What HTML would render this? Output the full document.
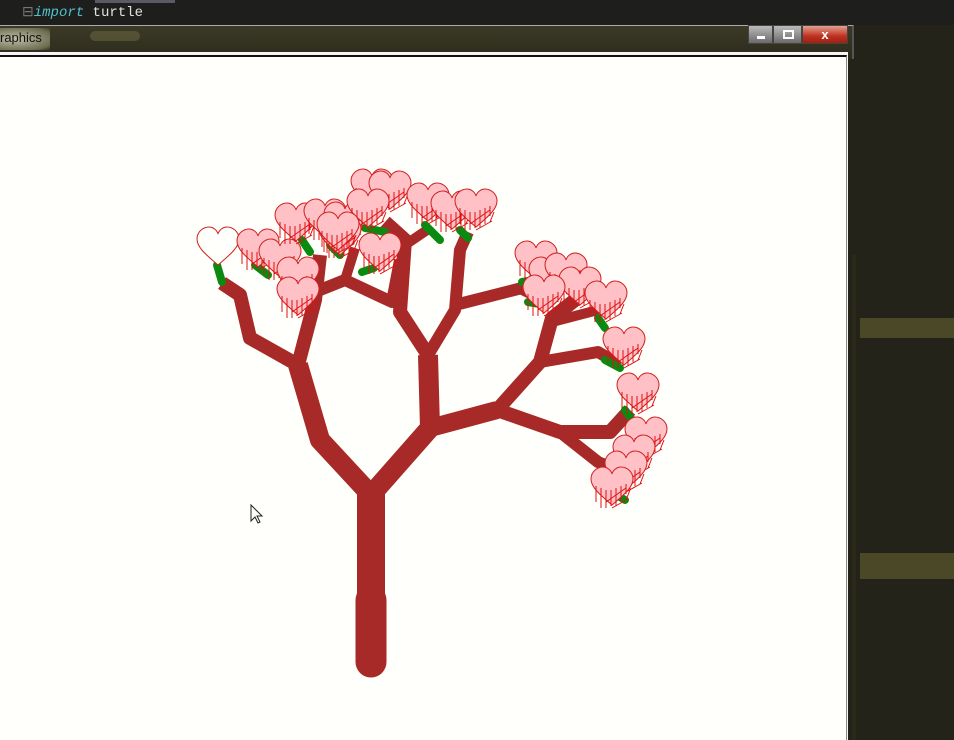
<!DOCTYPE html>
<html><head><meta charset="utf-8"><style>
html,body{margin:0;padding:0;width:954px;height:740px;overflow:hidden;background:#24231a;}
#wrap{position:relative;width:954px;height:740px;}
.abs{position:absolute;}
</style></head><body><div id="wrap">
<div class="abs" style="left:0;top:0;width:954px;height:25px;background:#1e1e1c"></div>
<div class="abs" style="left:95px;top:0;width:80px;height:3px;background:#5a5a64"></div>
<div class="abs" style="left:22px;top:4px;font:14px 'Liberation Mono',monospace;color:#e0e0e0;white-space:pre"><span style="color:#777">⊟</span><span style="color:#4fc1c9;font-style:italic">import</span> turtle</div>
<div class="abs" style="left:0;top:25px;width:852px;height:33px;background:linear-gradient(#3c3a26,#2c2b1c);border-top:1px solid #aaa;border-right:2px solid #555"></div>
<div class="abs" style="left:0;top:28px;width:50px;height:22px;background:radial-gradient(ellipse at 30% 50%,#bfbfa8,#6b6b50 80%,transparent)"></div>
<div class="abs" style="left:90px;top:31px;width:50px;height:10px;background:#5a5838;border-radius:5px;opacity:.8"></div>
<div class="abs" style="left:0;top:30px;font:13px 'Liberation Sans',sans-serif;color:#111">raphics</div>
<div class="abs" style="left:748px;top:25px;width:25px;height:19px;background:linear-gradient(#bbb,#6a6a6a);border:1px solid #444;box-sizing:border-box"><div style="position:absolute;left:8px;top:10px;width:8px;height:3px;background:#fff"></div></div>
<div class="abs" style="left:773px;top:25px;width:29px;height:19px;background:linear-gradient(#bbb,#6a6a6a);border:1px solid #444;box-sizing:border-box"><div style="position:absolute;left:9px;top:4px;width:7px;height:5px;border:2px solid #fff"></div></div>
<div class="abs" style="left:802px;top:25px;width:46px;height:19px;background:linear-gradient(#e0a090,#c03020 60%,#a02010);border:1px solid #444;box-sizing:border-box;color:#fff;font:bold 13px 'Liberation Sans',sans-serif;text-align:center;line-height:17px">x</div>
<div class="abs" style="left:0;top:52px;width:848px;height:688px;background:#f4f4f0"></div>
<div class="abs" style="left:0;top:55px;width:846px;height:685px;background:#fffffb;border-top:2px solid #111;border-right:1px solid #888"></div>
<div class="abs" style="left:852px;top:255px;width:4px;height:485px;background:#2a2818"></div>
<div class="abs" style="left:860px;top:318px;width:94px;height:20px;background:#4a4826"></div>
<div class="abs" style="left:860px;top:553px;width:94px;height:26px;background:#4a4826"></div>
<svg class="abs" style="left:0;top:0" width="954" height="740" viewBox="0 0 954 740">
<defs>
<g id="h">
<path d="M0,15 C-13,4 -21,-3 -21,-11 C-21,-19 -14,-23 -9,-23 C-5,-23 -1,-20 0,-16 C1,-20 5,-23 9,-23 C14,-23 21,-19 21,-11 C21,-3 13,4 0,15 Z" fill="#ffc0c6" stroke="#d02020" stroke-width="1"/>
<path d="M-16,-4 v16 M-11,-2 v20 M-6,0 v18 M-1,0 v16 M4,-2 v18 M9,-4 v16 M14,-6 v10 M-6,12 l20,-14 M0,18 l16,-9 M18,0 l-4,10" stroke="#e01010" stroke-width="1" fill="none"/>
</g>
<g id="hw">
<path d="M0,15 C-13,4 -21,-3 -21,-11 C-21,-19 -14,-23 -9,-23 C-5,-23 -1,-20 0,-16 C1,-20 5,-23 9,-23 C14,-23 21,-19 21,-11 C21,-3 13,4 0,15 Z" fill="#fffffb" stroke="#d02020" stroke-width="1"/>
</g>
</defs>
<g stroke="#a82a28" stroke-linecap="butt" stroke-linejoin="round" fill="none">
<path d="M371,600 V490" stroke-width="28"/>
<line x1="371" y1="600" x2="371" y2="662" stroke-width="31" stroke-linecap="round"/>
<path d="M371,495 L320,440 L298,365" stroke-width="20"/>
<path d="M371,495 L430,428 L428,355" stroke-width="20"/>
<path d="M430,428 L497,410" stroke-width="18"/>
<path d="M298,365 L250,338 L240,295 L222,283" stroke-width="14"/>
<path d="M298,365 L315,300 L320,255" stroke-width="14"/>
<path d="M320,290 L345,280 L392,302 L400,260" stroke-width="12"/>
<path d="M345,280 L355,248" stroke-width="10"/>
<path d="M428,355 L400,312 L405,240 L385,222" stroke-width="14"/>
<path d="M405,245 L430,228" stroke-width="10"/>
<path d="M428,355 L455,310 L460,250 L468,232" stroke-width="12"/>
<path d="M455,305 L522,288 L540,278" stroke-width="12"/>
<path d="M520,290 L540,300" stroke-width="8"/>
<path d="M497,410 L540,362 L552,318 L575,300" stroke-width="14"/>
<path d="M540,362 L598,352 L620,365" stroke-width="12"/>
<path d="M552,322 L598,310" stroke-width="10"/>
<path d="M497,410 L560,432 L610,432 L630,410" stroke-width="14"/>
<path d="M560,432 L598,462 L622,472" stroke-width="12"/>
</g>
<g stroke="#0a8a10" stroke-width="8" stroke-linecap="round">
<path d="M217,265 L222,282"/><path d="M255,265 L268,275"/><path d="M302,240 L310,252"/><path d="M330,245 L340,255"/>
<path d="M365,228 L385,232"/><path d="M362,272 L374,268"/><path d="M425,225 L440,240"/><path d="M460,230 L468,238"/>
<path d="M522,282 L535,280"/><path d="M528,302 L540,304"/><path d="M598,318 L605,328"/><path d="M605,360 L620,368"/>
<path d="M625,410 L632,420"/><path d="M625,452 L645,450"/><path d="M618,470 L630,478"/><path d="M605,488 L625,500"/>
</g>
<g>
<use href="#hw" x="218" y="250"/>
<use href="#h" x="258" y="252"/><use href="#h" x="280" y="262"/><use href="#h" x="298" y="280"/><use href="#h" x="298" y="300"/>
<use href="#h" x="296" y="226"/><use href="#h" x="325" y="222"/><use href="#h" x="345" y="225"/><use href="#h" x="340" y="240"/>
<use href="#h" x="372" y="192"/><use href="#h" x="390" y="194"/><use href="#h" x="368" y="212"/><use href="#h" x="428" y="206"/>
<use href="#h" x="452" y="214"/><use href="#h" x="476" y="212"/><use href="#h" x="380" y="256"/><use href="#h" x="338" y="235"/>
<use href="#h" x="536" y="264"/><use href="#h" x="550" y="280"/><use href="#h" x="566" y="276"/><use href="#h" x="580" y="290"/><use href="#h" x="544" y="298"/>
<use href="#h" x="606" y="304"/><use href="#h" x="624" y="350"/><use href="#h" x="638" y="396"/><use href="#h" x="646" y="440"/>
<use href="#h" x="634" y="458"/><use href="#h" x="626" y="474"/><use href="#h" x="612" y="490"/>
</g>
<path d="M251,505 v16 l4,-4 l3,6 l2,-1 l-3,-6 h5 z" fill="#fff" stroke="#222" stroke-width="1"/>
</svg>
</div>
</body></html>
